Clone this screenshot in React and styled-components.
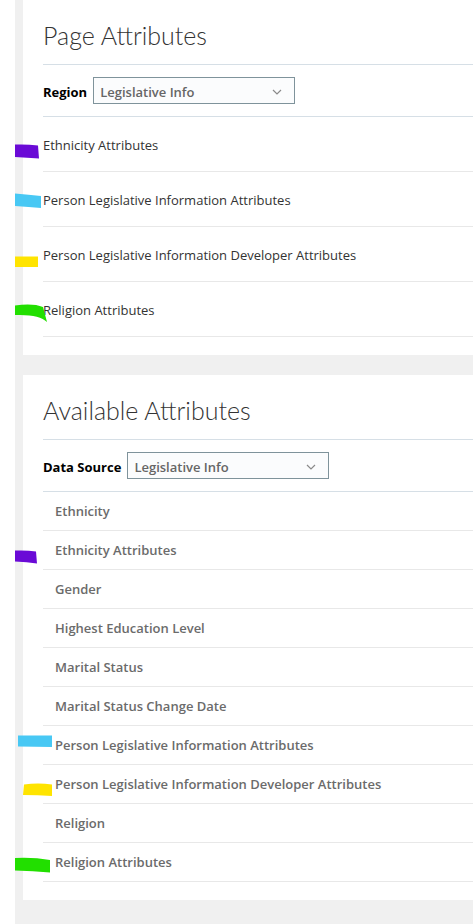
import React from 'react';
import styled, { createGlobalStyle } from 'styled-components';

const GlobalStyle = createGlobalStyle`
  html, body {
    margin: 0;
    padding: 0;
    background: #ffffff;
  }
  body {
    font-family: 'Open Sans', 'Noto Sans', 'Liberation Sans', sans-serif;
    color: #333333;
  }
`;

const Page = styled.div`
  width: 474px;
  min-height: 924px;
  padding-left: 15px;
  box-sizing: border-box;
  background: #ffffff;
`;

const Column = styled.div`
  width: 458px;
  min-height: 924px;
  box-sizing: border-box;
  background: #f0f0f0;
  padding: 0 0 24px 8px;
  display: flex;
  flex-direction: column;
  gap: 20px;
`;

const Panel = styled.section`
  background: #ffffff;
  padding: 0 0 18px 20px;
`;

const Title = styled.h2`
  margin: 0;
  padding: 16px 0 10px;
  font-family: 'Lato', 'Open Sans', sans-serif;
  font-size: 25px;
  line-height: 38px;
  font-weight: 300;
  color: #333333;
  border-bottom: 1px solid #d6dfe6;
`;

const FilterRow = styled.div`
  height: 51px;
  display: flex;
  align-items: center;
  gap: 6px;
  border-bottom: 1px solid #d6dfe6;
`;

const FilterLabel = styled.span`
  padding-top: 2px;
  font-size: 13px;
  font-weight: 700;
  color: #000000;
`;

const Select = styled.div`
  width: ${p => p.$width}px;
  height: 27px;
  box-sizing: border-box;
  border: 1px solid #7f939b;
  background: #fbfcfd;
  display: flex;
  align-items: center;
  justify-content: space-between;
  padding: 2px 12px 0 6px;
  font-size: 13px;
  font-weight: 600;
  color: #666666;
`;

const List = styled.ul`
  list-style: none;
  margin: 0;
  padding: 0;
`;

const Item = styled.li`
  position: relative;
  height: ${p => p.$height}px;
  box-sizing: border-box;
  display: flex;
  align-items: center;
  padding-left: ${p => p.$indent}px;
  padding-top: ${p => p.$nudge}px;
  border-bottom: 1px solid #e8e8e8;
  font-size: 13px;
  font-weight: ${p => (p.$muted ? 600 : 400)};
  color: ${p => (p.$muted ? '#6b6b6b' : '#333333')};
  white-space: nowrap;
`;

const MarkSvg = styled.svg`
  position: absolute;
  left: ${p => p.$left}px;
  top: ${p => p.$top}px;
  pointer-events: none;
`;

const Chevron = () => (
  <svg width="10" height="6" viewBox="0 0 10 6">
    <path d="M1 1 L5 5 L9 1" fill="none" stroke="#8a8a8a" strokeWidth="1.2" />
  </svg>
);

const MARKS = {
  purpleA: { w: 25, h: 15, color: '#6a0ad6', d: 'M0 0.5 Q12 0 23 1.5 L24 14.5 Q12 13.5 0 13 Z' },
  blueA: { w: 27, h: 16, color: '#48c8f4', d: 'M0 0.5 Q14 1.5 26 3 L26 15 Q14 14 0 13 Z' },
  yellowA: { w: 23, h: 12, color: '#ffe400', d: 'M0 0.5 L23 0.5 L23 11 L0 11 Z' },
  greenA: { w: 33, h: 19, color: '#22df00', d: 'M0 1.5 Q18 -1 28 3 L32 18 Q24 10 0 11 Z' },
  purpleB: { w: 23, h: 14, color: '#6a0ad6', d: 'M0 0.5 Q12 0 21 1.5 L22 13.5 Q12 12 0 11.5 Z' },
  blueB: { w: 35, h: 13, color: '#48c8f4', d: 'M0 0.5 L34 0.5 L34 12 L0 11.5 Z' },
  yellowB: { w: 30, h: 14, color: '#ffe400', d: 'M1 1.5 Q15 -0.5 29 1.5 L29 13 Q15 12 0 12 Z' },
  greenB: { w: 36, h: 16, color: '#22df00', d: 'M0 1 Q18 0 35 3 L35 15.5 Q18 14 0 13.5 Z' },
};

const Mark = ({ kind, left, top }) => {
  const m = MARKS[kind];
  return (
    <MarkSvg $left={left} $top={top} width={m.w} height={m.h} viewBox={`0 0 ${m.w} ${m.h}`}>
      <path d={m.d} fill={m.color} />
    </MarkSvg>
  );
};

const pageRows = [
  { label: 'Ethnicity Attributes', mark: 'purpleA', top: 27 },
  { label: 'Person Legislative Information Attributes', mark: 'blueA', top: 21 },
  { label: 'Person Legislative Information Developer Attributes', mark: 'yellowA', top: 29 },
  { label: 'Religion Attributes', mark: 'greenA', top: 22 },
];

const availableRows = [
  { label: 'Ethnicity' },
  { label: 'Ethnicity Attributes', mark: 'purpleB', left: -28, top: 19 },
  { label: 'Gender' },
  { label: 'Highest Education Level' },
  { label: 'Marital Status' },
  { label: 'Marital Status Change Date' },
  { label: 'Person Legislative Information Attributes', mark: 'blueB', left: -25, top: 9 },
  { label: 'Person Legislative Information Developer Attributes', mark: 'yellowB', left: -20, top: 18 },
  { label: 'Religion' },
  { label: 'Religion Attributes', mark: 'greenB', left: -28, top: 14 },
];

const App = () => (
  <>
    <GlobalStyle />
    <Page>
      <Column>
        <Panel>
          <Title>Page Attributes</Title>
          <FilterRow>
            <FilterLabel>Region</FilterLabel>
            <Select $width={202}>
              <span>Legislative Info</span>
              <Chevron />
            </Select>
          </FilterRow>
          <List>
            {pageRows.map(r => (
              <Item key={r.label} $height={55} $indent={0} $nudge={2}>
                {r.label}
                <Mark kind={r.mark} left={-28} top={r.top} />
              </Item>
            ))}
          </List>
        </Panel>

        <Panel>
          <Title>Available Attributes</Title>
          <FilterRow>
            <FilterLabel>Data Source</FilterLabel>
            <Select $width={202}>
              <span>Legislative Info</span>
              <Chevron />
            </Select>
          </FilterRow>
          <List>
            {availableRows.map(r => (
              <Item key={r.label} $height={39} $indent={12} $nudge={0} $muted>
                {r.label}
                {r.mark && <Mark kind={r.mark} left={r.left} top={r.top} />}
              </Item>
            ))}
          </List>
        </Panel>
      </Column>
    </Page>
  </>
);

export default App;
